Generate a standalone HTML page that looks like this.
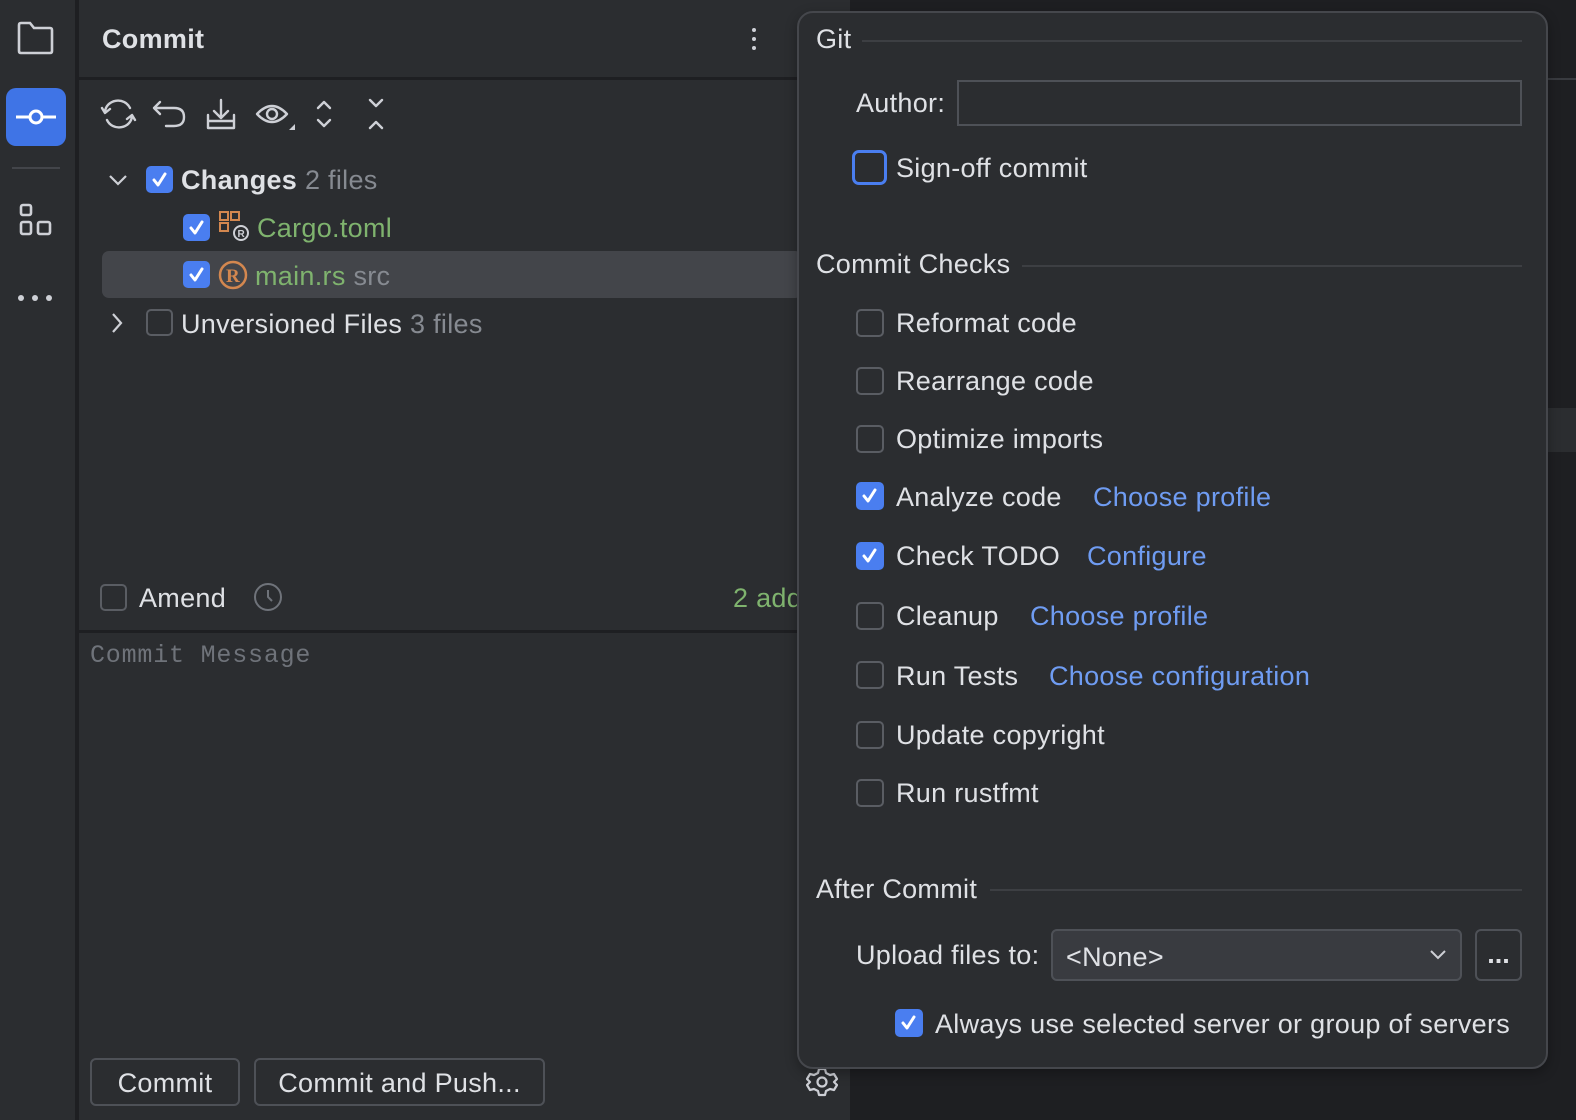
<!DOCTYPE html>
<html><head><meta charset="utf-8">
<style>
*{margin:0;padding:0;box-sizing:border-box}
body{width:1576px;height:1120px;background:#1e1f22;position:relative;overflow:hidden;font-family:"Liberation Sans",sans-serif;color:#dfe1e5;font-size:27px;letter-spacing:0.3px}
.a{position:absolute}
.t{position:absolute;line-height:30px;white-space:nowrap}
.cb{position:absolute;width:28px;height:28px;border:2px solid #5a5d63;border-radius:5px}
.cb.on{background:#4a7ef0;border-color:#4a7ef0}
.cb.on svg{position:absolute;left:3px;top:3px}
.lnk{color:#6f9cf2}
.dim{color:#868a91}
.grn{color:#7fb36e}
.sep{position:absolute;height:2px;background:#3d3f43}
</style></head><body>
<!-- sidebar -->
<div class="a" style="left:0;top:0;width:77px;height:1120px;background:#2b2d30;border-right:2px solid #1e1f22"></div>
<svg class="a" style="left:16px;top:20px" width="40" height="36" viewBox="0 0 40 36" fill="none" stroke="#ced0d6" stroke-width="2.6"><path d="M3 5 Q3 3 5 3 H14 L18 8 H34 Q36 8 36 10 V31 Q36 33 34 33 H5 Q3 33 3 31 Z"/></svg>
<div class="a" style="left:6px;top:88px;width:60px;height:58px;background:#3f74e6;border-radius:10px"></div>
<svg class="a" style="left:14px;top:104px" width="44" height="26" viewBox="0 0 44 26" fill="none" stroke="#fff" stroke-width="3"><circle cx="22" cy="13" r="6"/><path d="M2 13H16M28 13H42"/></svg>
<div class="a" style="left:12px;top:167px;width:48px;height:2px;background:#43454a"></div>
<svg class="a" style="left:18px;top:202px" width="36" height="36" viewBox="0 0 36 36" fill="none" stroke="#ced0d6" stroke-width="2.6"><rect x="3" y="3" width="10" height="10" rx="2"/><rect x="3" y="20" width="10" height="12" rx="2"/><rect x="20" y="20" width="12" height="12" rx="2"/></svg>
<div class="a" style="left:18px;top:295px;width:6px;height:6px;border-radius:3px;background:#ced0d6"></div>
<div class="a" style="left:32px;top:295px;width:6px;height:6px;border-radius:3px;background:#ced0d6"></div>
<div class="a" style="left:46px;top:295px;width:6px;height:6px;border-radius:3px;background:#ced0d6"></div>

<!-- main panel -->
<div class="a" style="left:79px;top:0;width:771px;height:1120px;background:#2b2d30"></div>
<div class="a" style="left:79px;top:77px;width:771px;height:3px;background:#1e1f22"></div>
<div class="t" style="left:102px;top:24px;font-weight:bold;font-size:27px">Commit</div>
<div class="a" style="left:752px;top:28px;width:4px;height:4px;border-radius:2px;background:#ced0d6;box-shadow:0 9px 0 #ced0d6,0 18px 0 #ced0d6"></div>
<!-- toolbar -->
<svg class="a" style="left:100px;top:96px" width="300" height="36" viewBox="0 0 300 36" fill="none" stroke="#ced0d6" stroke-width="2.4" stroke-linecap="round" stroke-linejoin="round">
<path d="M5 16 A13 12 0 0 1 30 12 M32 20 A13 12 0 0 1 7 24 M2 12 L5 17 L10 13 M35 24 L32 19 L27 23"/>
<path d="M60 6 L54 12 L60 18 M54 12 H74 Q84 12 84 21 Q84 30 74 30 H66"/>
<path d="M121 4 V21 M114 15 L121 22 L128 15 M108 19 V32 H134 V19 M108 25 H134" />
<path d="M157 18 Q172 2 187 18 Q172 34 157 18 Z"/><circle cx="172" cy="18" r="5"/>
<path d="M189 34 L195 28 V34 Z" fill="#ced0d6" stroke="none"/>
<path d="M218 12 L224 6 L230 12 M218 24 L224 30 L230 24"/>
<path d="M270 4 L276 10 L282 4 M270 32 L276 26 L282 32"/>
</svg>
<!-- tree -->
<svg class="a" style="left:108px;top:172px" width="20" height="16" viewBox="0 0 20 16" fill="none" stroke="#ced0d6" stroke-width="2.2"><path d="M2 4 L10 12 L18 4"/></svg>
<div class="cb on" style="left:146px;top:166px;width:27px;height:27px"><svg width="18" height="18" viewBox="0 0 18 18" fill="none" stroke="#fff" stroke-width="3" stroke-linecap="round" stroke-linejoin="round"><path d="M3 9 L7 14 L14 3"/></svg></div>
<div class="t" style="left:181px;top:165px;font-weight:bold">Changes <span class="dim" style="font-weight:normal">2 files</span></div>
<div class="cb on" style="left:183px;top:214px;width:27px;height:27px"><svg width="18" height="18" viewBox="0 0 18 18" fill="none" stroke="#fff" stroke-width="3" stroke-linecap="round" stroke-linejoin="round"><path d="M3 9 L7 14 L14 3"/></svg></div>
<svg class="a" style="left:218px;top:210px" width="32" height="32" viewBox="0 0 32 32" fill="none" stroke="#d3874f" stroke-width="2"><rect x="2" y="2" width="8" height="8"/><rect x="13" y="2" width="8" height="8"/><rect x="2" y="13" width="8" height="8"/><circle cx="23" cy="23" r="7" fill="#2b2d30" stroke="#ced0d6"/><text x="19.5" y="27" font-size="10" fill="#ced0d6" stroke="none" font-family="Liberation Sans" font-weight="bold">R</text></svg>
<div class="t grn" style="left:257px;top:213px">Cargo.toml</div>
<div class="a" style="left:102px;top:251px;width:700px;height:47px;background:#43454a;border-radius:7px"></div>
<div class="cb on" style="left:183px;top:261px;width:27px;height:27px"><svg width="18" height="18" viewBox="0 0 18 18" fill="none" stroke="#fff" stroke-width="3" stroke-linecap="round" stroke-linejoin="round"><path d="M3 9 L7 14 L14 3"/></svg></div>
<svg class="a" style="left:217px;top:259px" width="32" height="32" viewBox="0 0 32 32"><circle cx="16" cy="16" r="13" fill="none" stroke="#d3874f" stroke-width="2.5"/><text x="9" y="23" font-size="19" fill="#d3874f" font-family="Liberation Serif" font-weight="bold">R</text></svg>
<div class="t" style="left:255px;top:261px"><span class="grn">main.rs</span> <span class="dim">src</span></div>
<svg class="a" style="left:110px;top:312px" width="14" height="22" viewBox="0 0 14 22" fill="none" stroke="#ced0d6" stroke-width="2.2"><path d="M3 2 L11 11 L3 20"/></svg>
<div class="cb" style="left:146px;top:309px;width:27px;height:27px"></div>
<div class="t" style="left:181px;top:309px">Unversioned Files <span class="dim">3 files</span></div>
<!-- amend -->
<div class="cb" style="left:100px;top:584px;width:27px;height:27px"></div>
<div class="t" style="left:139px;top:583px">Amend</div>
<svg class="a" style="left:253px;top:582px" width="30" height="30" viewBox="0 0 30 30" fill="none" stroke="#6f737a" stroke-width="2"><circle cx="15" cy="15" r="13"/><path d="M15 8 V15 L19 19"/></svg>
<div class="t grn" style="left:733px;top:583px">2 add</div>
<div class="a" style="left:79px;top:630px;width:771px;height:3px;background:#1e1f22"></div>
<div class="t" style="left:90px;top:641px;font-family:'Liberation Mono',monospace;font-size:25px;letter-spacing:0.8px;color:#6f737a">Commit Message</div>
<!-- buttons -->
<div class="a" style="left:90px;top:1058px;width:150px;height:48px;border:2px solid #4e5157;border-radius:6px"></div>
<div class="t" style="left:90px;top:1068px;width:150px;text-align:center">Commit</div>
<div class="a" style="left:254px;top:1058px;width:291px;height:48px;border:2px solid #4e5157;border-radius:6px"></div>
<div class="t" style="left:254px;top:1068px;width:291px;text-align:center">Commit and Push...</div>
<svg class="a" style="left:806px;top:1066px" width="32" height="32" viewBox="0 0 32 32" fill="none" stroke="#ced0d6" stroke-width="2.2" stroke-linejoin="round"><path d="M13 3 H19 L20 7 L24 9 L28 8 L31 13 L28 16 L31 19 L28 24 L24 23 L20 25 L19 29 H13 L12 25 L8 23 L4 24 L1 19 L4 16 L1 13 L4 8 L8 9 L12 7 Z"/><circle cx="16" cy="16" r="4.5"/></svg>

<!-- right bg details -->
<div class="a" style="left:1547px;top:78px;width:29px;height:2px;background:#393b40"></div>
<div class="a" style="left:1547px;top:408px;width:29px;height:44px;background:#2b2d30"></div>

<!-- popup -->
<div class="a" style="left:797px;top:11px;width:751px;height:1058px;background:#2b2d30;border:2px solid #45474c;border-radius:16px;box-shadow:0 4px 12px rgba(0,0,0,.3)"></div>
<div class="t" style="left:816px;top:24px">Git</div>
<div class="sep" style="left:862px;top:40px;width:660px"></div>
<div class="t" style="left:856px;top:88px">Author:</div>
<div class="a" style="left:957px;top:80px;width:565px;height:46px;border:2px solid #4e5157"></div>
<div class="a" style="left:852px;top:150px;width:35px;height:35px;border:3px solid #4a7ef0;border-radius:7px"></div>
<div class="t" style="left:896px;top:153px">Sign-off commit</div>

<div class="t" style="left:816px;top:249px">Commit Checks</div>
<div class="sep" style="left:1022px;top:265px;width:500px"></div>

<div class="cb" style="left:856px;top:309px"></div><div class="t" style="left:896px;top:308px">Reformat code</div>
<div class="cb" style="left:856px;top:367px"></div><div class="t" style="left:896px;top:366px">Rearrange code</div>
<div class="cb" style="left:856px;top:425px"></div><div class="t" style="left:896px;top:424px">Optimize imports</div>
<div class="cb on" style="left:856px;top:482px"><svg width="18" height="18" viewBox="0 0 18 18" fill="none" stroke="#fff" stroke-width="3" stroke-linecap="round" stroke-linejoin="round"><path d="M3 9 L7 14 L14 3"/></svg></div><div class="t" style="left:896px;top:482px">Analyze code</div><div class="t lnk" style="left:1093px;top:482px">Choose profile</div>
<div class="cb on" style="left:856px;top:542px"><svg width="18" height="18" viewBox="0 0 18 18" fill="none" stroke="#fff" stroke-width="3" stroke-linecap="round" stroke-linejoin="round"><path d="M3 9 L7 14 L14 3"/></svg></div><div class="t" style="left:896px;top:541px">Check TODO</div><div class="t lnk" style="left:1087px;top:541px">Configure</div>
<div class="cb" style="left:856px;top:602px"></div><div class="t" style="left:896px;top:601px">Cleanup</div><div class="t lnk" style="left:1030px;top:601px">Choose profile</div>
<div class="cb" style="left:856px;top:661px"></div><div class="t" style="left:896px;top:661px">Run Tests</div><div class="t lnk" style="left:1049px;top:661px">Choose configuration</div>
<div class="cb" style="left:856px;top:721px"></div><div class="t" style="left:896px;top:720px">Update copyright</div>
<div class="cb" style="left:856px;top:779px"></div><div class="t" style="left:896px;top:778px">Run rustfmt</div>

<div class="t" style="left:816px;top:874px">After Commit</div>
<div class="sep" style="left:990px;top:889px;width:532px"></div>
<div class="t" style="left:856px;top:940px">Upload files to:</div>
<div class="a" style="left:1051px;top:929px;width:411px;height:52px;background:#393b40;border:2px solid #4e5157;border-radius:6px"></div>
<div class="t" style="left:1066px;top:942px">&lt;None&gt;</div>
<svg class="a" style="left:1428px;top:948px" width="20" height="14" viewBox="0 0 20 14" fill="none" stroke="#ced0d6" stroke-width="2"><path d="M3 3 L10 10 L17 3"/></svg>
<div class="a" style="left:1475px;top:929px;width:47px;height:52px;border:2px solid #4e5157;border-radius:6px"></div>
<div class="t" style="left:1475px;top:939px;width:47px;text-align:center;font-weight:bold;letter-spacing:0">...</div>
<div class="cb on" style="left:895px;top:1009px"><svg width="18" height="18" viewBox="0 0 18 18" fill="none" stroke="#fff" stroke-width="3" stroke-linecap="round" stroke-linejoin="round"><path d="M3 9 L7 14 L14 3"/></svg></div>
<div class="t" style="left:935px;top:1009px">Always use selected server or group of servers</div>
</body></html>
